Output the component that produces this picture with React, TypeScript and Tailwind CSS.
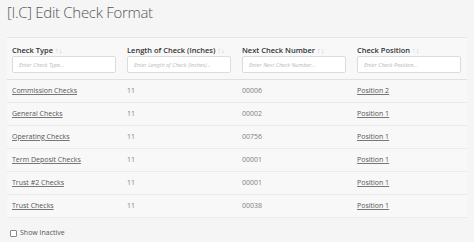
import React from 'react';

interface CheckRow {
  type: string;
  length: string;
  next: string;
  position: string;
}

const rows: CheckRow[] = [
  { type: 'Commission Checks', length: '11', next: '00006', position: 'Position 2' },
  { type: 'General Checks', length: '11', next: '00002', position: 'Position 1' },
  { type: 'Operating Checks', length: '11', next: '00756', position: 'Position 1' },
  { type: 'Term Deposit Checks', length: '11', next: '00001', position: 'Position 1' },
  { type: 'Trust #2 Checks', length: '11', next: '00001', position: 'Position 1' },
  { type: 'Trust Checks', length: '11', next: '00038', position: 'Position 1' },
];

const columns = [
  { label: 'Check Type', placeholder: 'Enter Check Type...' },
  { label: 'Length of Check (Inches)', placeholder: 'Enter Length of Check (Inches)...' },
  { label: 'Next Check Number', placeholder: 'Enter Next Check Number...' },
  { label: 'Check Position', placeholder: 'Enter Check Position...' },
];

const App: React.FC = () => {
  return (
    <div
      className="w-[474px] h-[242px] bg-[#f5f5f5] text-[#333] overflow-hidden"
      style={{ fontFamily: '"Open Sans", "Noto Sans", sans-serif' }}
    >
      <h1 className="pl-[7px] pt-[1px] text-[15px] leading-[22px] font-light tracking-[-0.3px] text-[#555]">
        [I.C] Edit Check Format
      </h1>

      <div className="mt-[14px] mx-[7px] border-t border-[#e6e6e6] bg-[#f8f8f8]">
        <div className="grid grid-cols-4 gap-x-[11px] pl-[5px] pr-[6px] pt-[6px] pb-[6px] border-b border-[#e0e0e0]">
          {columns.map((c) => (
            <div key={c.label} className="flex flex-col">
              <div className="text-[7.5px] leading-[10px] font-semibold text-[#333] h-[11px] pt-[1px]">
                {c.label} <span className="font-normal text-[#c8c8c8]">↑↓</span>
              </div>
              <input
                placeholder={c.placeholder}
                className="mt-[1px] h-[17px] w-full bg-white border border-[#dcdcdc] rounded-[2px] px-[6px] text-[5.5px] italic placeholder:text-[#b8b8b8] outline-none"
              />
            </div>
          ))}
        </div>
        {rows.map((r) => (
          <div
            key={r.type}
            className="grid grid-cols-4 gap-x-[11px] pl-[5px] pr-[6px] h-[23px] items-center border-b border-[#ebebeb] text-[7px] text-[#555]"
          >
            <a className="underline underline-offset-1 decoration-[#777]">{r.type}</a>
            <span className="text-[#808080]">{r.length}</span>
            <span className="text-[#808080]">{r.next}</span>
            <a className="underline underline-offset-1 decoration-[#777]">{r.position}</a>
          </div>
        ))}
      </div>

      <label className="flex items-center gap-[3px] pl-[10px] mt-[10px] text-[7px] text-[#555]">
        <span className="w-[7px] h-[7px] border border-[#888] rounded-[1px] bg-white" />
        Show Inactive
      </label>
    </div>
  );
};

export default App;
